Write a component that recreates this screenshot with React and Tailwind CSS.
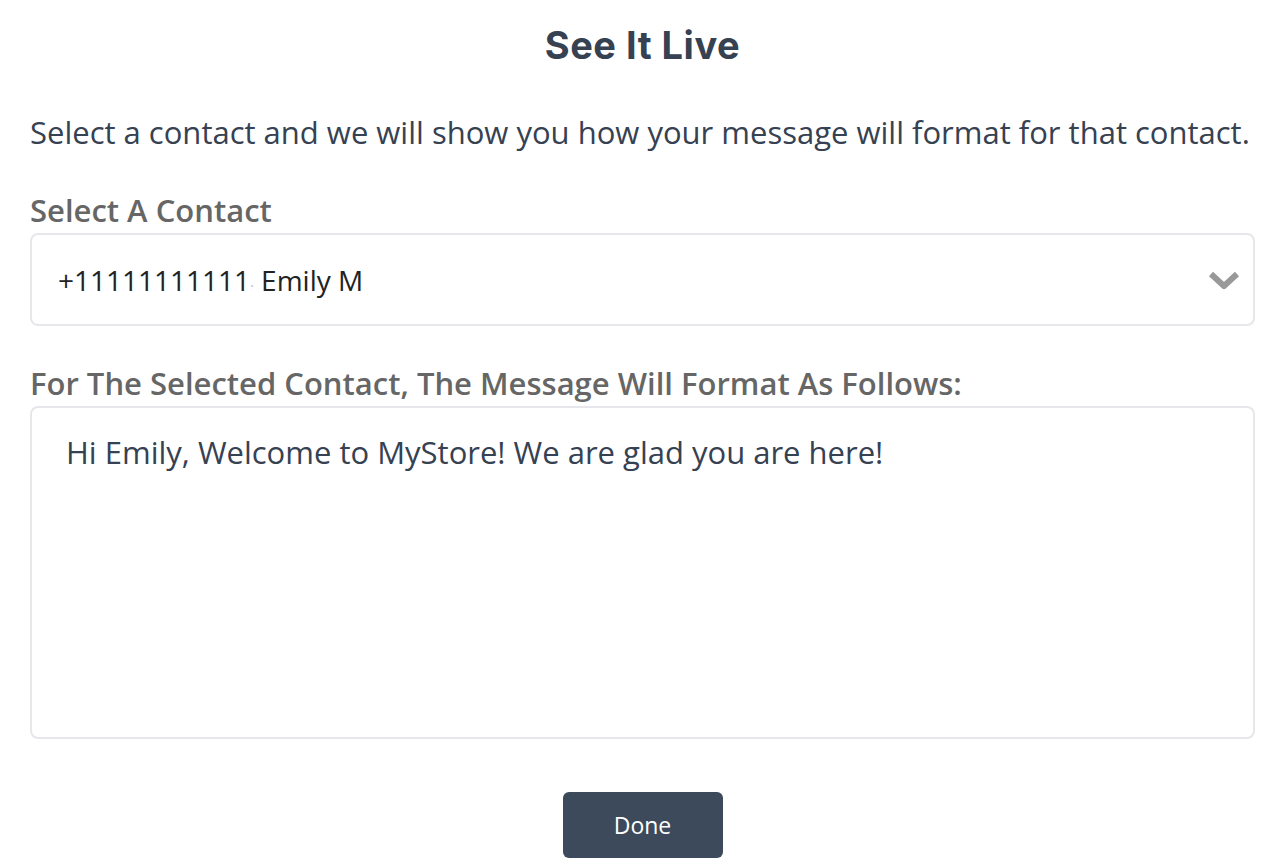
export default function App() {
  return (
    <div className="min-h-screen bg-white" style={{ fontFamily: '"Open Sans", "Noto Sans", sans-serif' }}>
      <div className="ml-[30px] w-[1225px] flex flex-col">
        <h2
          className="text-center text-[38px] font-bold text-[#364152] pt-[20px] leading-[50px] tracking-[0.5px]"
          style={{ fontFamily: '"Inter", "Lato", sans-serif' }}
        >
          See It Live
        </h2>

        <p className="mt-[42px] text-[31px] leading-[40px] text-[#364152] whitespace-nowrap">
          Select a contact and we will show you how your message will format for that contact.
        </p>

        <label className="mt-[38px] text-[31px] leading-[40px] font-semibold text-[#666]">
          Select A Contact
        </label>
        <div className="mt-[3px] h-[93px] border-2 border-[#e5e7eb] rounded-[8px] flex items-center justify-between pl-[26px] pr-[12px]">
          <span className="text-[28px] text-[#222]">
            +11111111111<span className="text-[#bbb] text-[14px]">·</span> Emily M
          </span>
          <svg width="34" height="22" viewBox="0 0 34 22" fill="none">
            <path d="M4 5 L17 17 L30 5" stroke="#999" strokeWidth="6" strokeLinejoin="round" />
          </svg>
        </div>

        <label className="mt-[37px] text-[31px] leading-[40px] font-semibold text-[#666]">
          For The Selected Contact, The Message Will Format As Follows:
        </label>
        <div className="mt-[3px] h-[333px] border-2 border-[#e5e7eb] rounded-[8px] px-[34px] pt-[24px]">
          <p className="text-[31px] leading-[40px] text-[#364152]">
            Hi Emily, Welcome to MyStore! We are glad you are here!
          </p>
        </div>

        <div className="flex justify-center mt-[53px]">
          <button className="w-[160px] h-[66px] bg-[#3d4a5c] rounded-[6px] text-white text-[23px]">
            Done
          </button>
        </div>
      </div>
    </div>
  );
}
